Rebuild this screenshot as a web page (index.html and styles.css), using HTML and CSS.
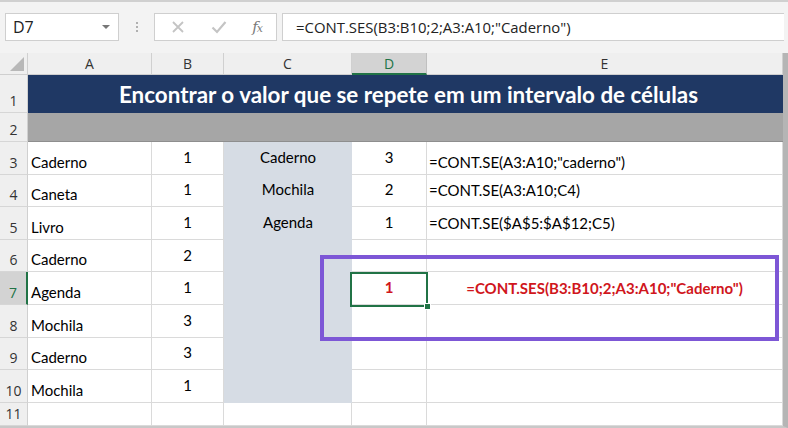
FILE: index.html
```html
<!DOCTYPE html>
<html lang="pt">
<head>
    <meta charset="UTF-8">
    <title>CONT.SES</title>
    <link rel="stylesheet" href="styles.css">
</head>
<body>
    <div class="toolbar">
        <div class="namebox">
            <span>D7</span>
            <span class="caret"></span>
        </div>
        <div class="dots"><i></i><i></i><i></i></div>
        <div class="fbuttons">
            <svg width="14" height="14" viewBox="0 0 14 14"><path d="M2 2 L12 12 M12 2 L2 12" stroke="#c4c4c4" stroke-width="1.8" fill="none"/></svg>
            <svg width="16" height="14" viewBox="0 0 16 14"><path d="M1.5 7.5 L6 12 L14.5 2" stroke="#c4c4c4" stroke-width="2.2" fill="none"/></svg>
            <span class="fx">f<small>x</small></span>
        </div>
        <div class="formula">=CONT.SES(B3:B10;2;A3:A10;"Caderno")</div>
    </div>

    <div class="sheet">
        <div class="corner"><span class="tri"></span></div>
        <div class="ch">A</div>
        <div class="ch">B</div>
        <div class="ch">C</div>
        <div class="ch active">D</div>
        <div class="ch">E</div>

        <div class="rh">1</div>
        <div class="title">Encontrar o valor que se repete em um intervalo de células</div>

        <div class="rh">2</div>
        <div class="band"></div>

        <div class="rh">3</div>
        <div class="c a">Caderno</div>
        <div class="c b">1</div>
        <div class="c k">Caderno</div>
        <div class="c d">3</div>
        <div class="c e low">=CONT.SE(A3:A10;"caderno")</div>

        <div class="rh">4</div>
        <div class="c a">Caneta</div>
        <div class="c b">1</div>
        <div class="c k">Mochila</div>
        <div class="c d">2</div>
        <div class="c e">=CONT.SE(A3:A10;C4)</div>

        <div class="rh">5</div>
        <div class="c a">Livro</div>
        <div class="c b">1</div>
        <div class="c k">Agenda</div>
        <div class="c d">1</div>
        <div class="c e">=CONT.SE($A$5:$A$12;C5)</div>

        <div class="rh">6</div>
        <div class="c a">Caderno</div>
        <div class="c b">2</div>
        <div class="c k"></div>
        <div class="c d"></div>
        <div class="c e"></div>

        <div class="rh sel">7</div>
        <div class="c a">Agenda</div>
        <div class="c b">1</div>
        <div class="c k"></div>
        <div class="c d red">1</div>
        <div class="c e red mid">=CONT.SES(B3:B10;2;A3:A10;"Caderno")</div>

        <div class="rh">8</div>
        <div class="c a">Mochila</div>
        <div class="c b">3</div>
        <div class="c k"></div>
        <div class="c d"></div>
        <div class="c e"></div>

        <div class="rh">9</div>
        <div class="c a">Caderno</div>
        <div class="c b">3</div>
        <div class="c k"></div>
        <div class="c d"></div>
        <div class="c e"></div>

        <div class="rh">10</div>
        <div class="c a">Mochila</div>
        <div class="c b">1</div>
        <div class="c k"></div>
        <div class="c d"></div>
        <div class="c e"></div>

        <div class="rh">11</div>
        <div class="c"></div>
        <div class="c"></div>
        <div class="c"></div>
        <div class="c"></div>
        <div class="c"></div>

        <div class="selection"><span class="handle"></span></div>
        <div class="highlight"></div>
    </div>
</body>
</html>
```

FILE: styles.css
```css
* {
    box-sizing: border-box;
}
body {
    margin: 0;
    width: 788px;
    height: 428px;
    overflow: hidden;
    background: #f3f3f3;
    font-family: "Lato", "Liberation Sans", sans-serif;
    color: #000;
}
.toolbar {
    height: 53px;
    border-top: 2px solid #d0d0d0;
    display: flex;
    align-items: flex-start;
    padding: 11px 0 0 5px;
    background: #f3f3f3;
}
.namebox {
    width: 114px;
    height: 28px;
    background: #fff;
    border: 1px solid #cfcfcf;
    display: flex;
    align-items: center;
    justify-content: space-between;
    padding: 0 8px 0 7px;
    font-family: "Open Sans", sans-serif;
    font-size: 16px;
    color: #222;
}
.caret {
    width: 0;
    height: 0;
    border-left: 4px solid transparent;
    border-right: 4px solid transparent;
    border-top: 4px solid #777;
}
.dots {
    width: 35px;
    height: 28px;
    display: flex;
    flex-direction: column;
    align-items: center;
    justify-content: center;
    gap: 2px;
}
.dots i {
    width: 2px;
    height: 2px;
    background: #b0b0b0;
}
.fbuttons {
    width: 123px;
    height: 28px;
    background: #fff;
    border: 1px solid #cfcfcf;
    display: flex;
    align-items: center;
    justify-content: space-between;
    padding: 0 14px 0 16px;
}
.fx {
    font-family: "DejaVu Serif", serif;
    font-style: italic;
    font-size: 15px;
    color: #7a7a7a;
    letter-spacing: -1px;
}
.fx small {
    font-size: 11px;
}
.formula {
    margin-left: 5px;
    width: 502px;
    height: 28px;
    background: #fff;
    border: 1px solid #cfcfcf;
    border-right: none;
    padding: 3px 0 0 13px;
    font-family: "Open Sans", sans-serif;
    font-size: 14.9px;
    color: #222;
}
.sheet {
    position: relative;
    display: grid;
    grid-template-columns: 28px 124px 72px 128px 75px 356px;
    grid-template-rows: 22px 38px 29px repeat(8, 32.6px) 23px;
    width: 788px;
    border-right: 5px solid #b5b5b5;
    border-bottom: 2px solid #c8c8c8;
    background: #fff;
}
.corner {
    background: #efefef;
    border-right: 1px solid #d0d0d0;
    border-bottom: 1px solid #cfcfcf;
    position: relative;
}
.tri {
    position: absolute;
    right: 3px;
    bottom: 3px;
    width: 0;
    height: 0;
    border-left: 14px solid transparent;
    border-bottom: 14px solid #b8b8b8;
}
.ch {
    background: #efefef;
    border-right: 1px solid #d0d0d0;
    border-bottom: 1px solid #cfcfcf;
    display: flex;
    align-items: center;
    justify-content: center;
    font-family: "Open Sans", sans-serif;
    font-size: 14px;
    color: #333;
}
.ch.active {
    background: #d3d3d3;
    color: #217346;
    border-bottom: 2px solid #217346;
    border-right-color: #c0c0c0;
}
.rh {
    background: #efefef;
    border-right: 1px solid #d0d0d0;
    border-bottom: 1px solid #d6d6d6;
    display: flex;
    align-items: flex-end;
    justify-content: center;
    padding-bottom: 2px;
    font-family: "Open Sans", sans-serif;
    font-size: 14px;
    color: #333;
}
.rh.sel {
    background: #d3d3d3;
    color: #217346;
    border-right: 2px solid #217346;
}
.title {
    grid-column: 2 / 7;
    background: #1f3864;
    color: #fff;
    font-weight: bold;
    font-size: 22.4px;
    display: flex;
    align-items: center;
    justify-content: center;
    padding-left: 6px;
}
.band {
    grid-column: 2 / 7;
    background: #a6a6a6;
    border-bottom: 1px solid #8e8e8e;
}
.c {
    border-right: 1px solid #dadada;
    border-bottom: 1px solid #dadada;
    font-size: 15px;
    display: flex;
    align-items: center;
    white-space: nowrap;
}
.a {
    align-items: flex-end;
    padding: 0 0 3px 3px;
}
.b, .d {
    justify-content: center;
    padding-bottom: 2px;
}
.k {
    background: #d6dce4;
    border-right: none;
    border-bottom-color: #d6dce4;
    justify-content: center;
    padding-bottom: 2px;
}
.e {
    padding-left: 2px;
}
.e.low {
    align-items: flex-end;
    padding-bottom: 3px;
}
.red {
    color: #d0161c;
    font-weight: bold;
}
.mid {
    justify-content: center;
    padding-left: 0;
}
.selection {
    position: absolute;
    left: 350px;
    top: 219px;
    width: 78px;
    height: 35px;
    border: 2px solid #217346;
}
.handle {
    position: absolute;
    right: -5px;
    bottom: -5px;
    width: 7px;
    height: 7px;
    background: #217346;
    border: 1px solid #fff;
}
.highlight {
    position: absolute;
    left: 320px;
    top: 202px;
    width: 459px;
    height: 86px;
    border: 4px solid #7d57d6;
}
```
